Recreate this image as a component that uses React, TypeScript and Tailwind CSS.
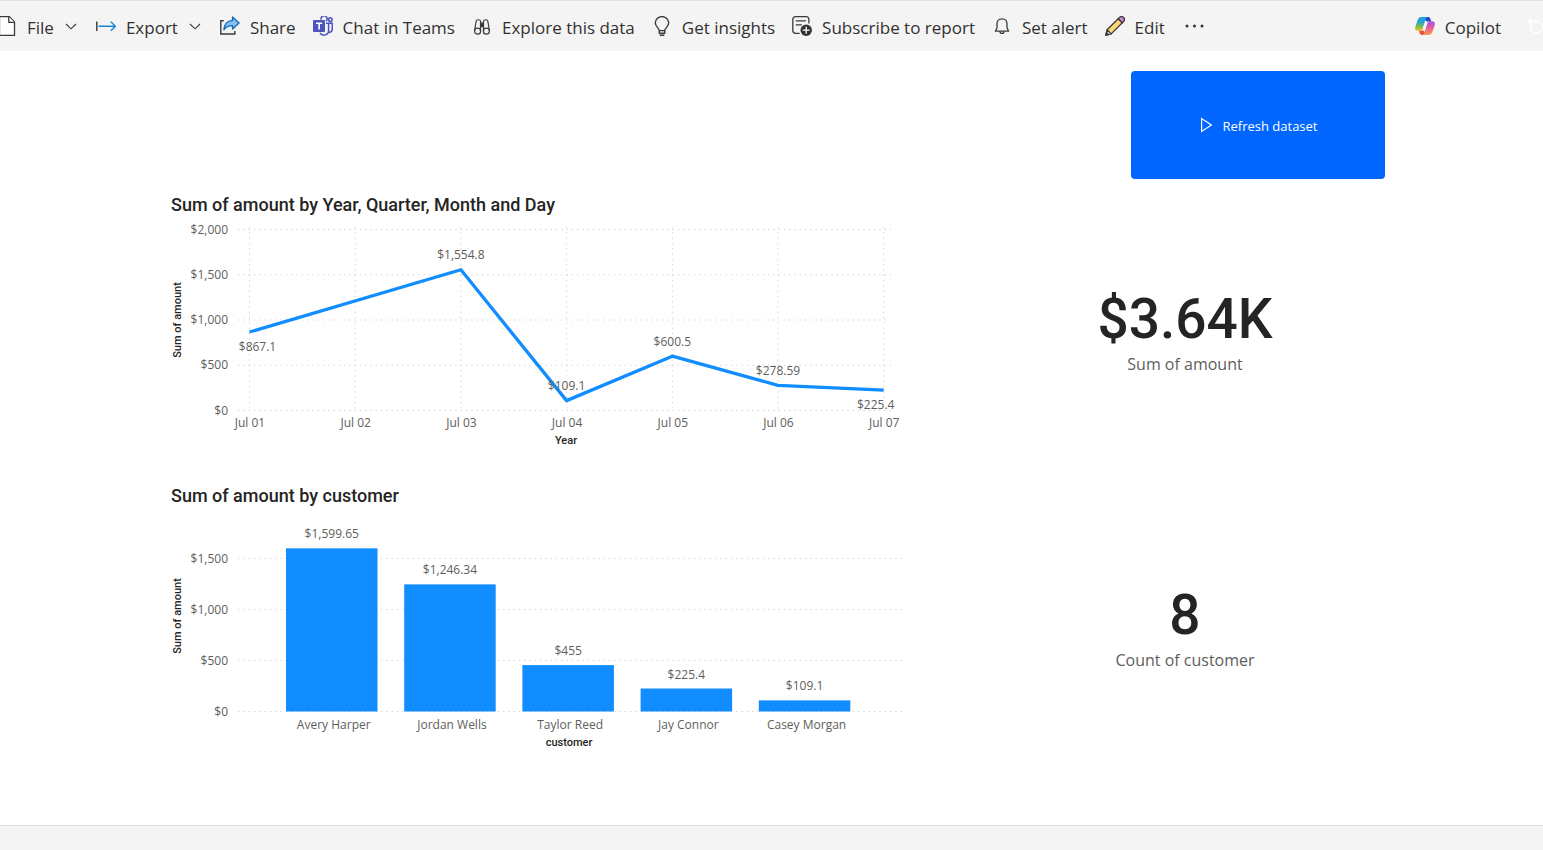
import type { ReactNode } from "react"

const dailyData = [
  { day: "Jul 01", value: 867.1, label: "$867.1", dx: 8, dy: 19 },
  { day: "Jul 02", value: null, label: "", dx: 0, dy: 0 },
  { day: "Jul 03", value: 1554.8, label: "$1,554.8", dx: 0, dy: -11 },
  { day: "Jul 04", value: 109.1, label: "$109.1", dx: 0, dy: -11 },
  { day: "Jul 05", value: 600.5, label: "$600.5", dx: 0, dy: -10 },
  { day: "Jul 06", value: 278.59, label: "$278.59", dx: 0, dy: -10 },
  { day: "Jul 07", value: 225.4, label: "$225.4", dx: -8, dy: 19 },
]

const customerData = [
  { name: "Avery Harper", value: 1599.65, label: "$1,599.65" },
  { name: "Jordan Wells", value: 1246.34, label: "$1,246.34" },
  { name: "Taylor Reed", value: 455, label: "$455" },
  { name: "Jay Connor", value: 225.4, label: "$225.4" },
  { name: "Casey Morgan", value: 109.1, label: "$109.1" },
]

const formatTick = (value: number) => `$${value.toLocaleString("en-US")}`

/* Toolbar icons */

function FileIcon() {
  return (
    <svg width="20" height="20" viewBox="0 0 20 20" fill="#fff" stroke="#3b3a39" strokeWidth="1.3">
      <path d="M2.500 .7h9.800l5.200 5.200v13.4H2.500z" />
      <path d="M11.800 .7v5.700h5.700" />
    </svg>
  )
}

function ExportIcon() {
  return (
    <svg width="20" height="20" viewBox="0 0 20 20" fill="none" strokeWidth="1.4">
      <path d="M.8 5.500v9.500" stroke="#3b3a39" />
      <path d="M2.500 10.300h17M14.800 5.800l4.600 4.500-4.600 4.500" stroke="#1a86d0" />
    </svg>
  )
}

function ShareIcon() {
  return (
    <svg width="20" height="20" viewBox="0 0 20 20" fill="none">
      <path d="M3.800 4.700H.8v13.300h14v-3" stroke="#3b3a39" strokeWidth="1.4" />
      <path
        d="M12.500 .9l6.600 6.100-6.600 6v-3.400c-4-.1-6.500 1.200-8.600 4.300.3-5.300 3.200-9 8.600-9.500z"
        fill="#83beec"
        stroke="#0f6cbd"
        strokeWidth="1.3"
        strokeLinejoin="round"
      />
    </svg>
  )
}

function TeamsIcon() {
  return (
    <svg width="20" height="20" viewBox="0 0 20 20" fill="none" stroke="#4b53bc" strokeWidth="1.5">
      <path d="M8.200 3.600A3 3 0 1 1 13 5.200" />
      <circle cx="17.300" cy="3.600" r="1.800" />
      <path d="M13 7.200h2.600v7.200a4.700 4.700 0 0 1-8.600 2.600" />
      <path d="M15.600 7.200h3.700v5.600c0 2.300-1.500 3.800-3.800 3.700" />
      <rect x="0" y="4" width="12" height="12" rx="1" fill="#4b53bc" stroke="none" />
      <path d="M3 7.200h6.200M6.100 7.200v6.200" stroke="#fff" strokeWidth="1.6" />
    </svg>
  )
}

function BinocularsIcon() {
  return (
    <svg width="20" height="20" viewBox="0 0 20 20" fill="none" stroke="#3b3a39" strokeWidth="1.2">
      <path d="M2.600 14.500L4.200 5c.3-1.700 4-1.700 4.300 0v10.500" />
      <path d="M17.400 14.500L15.800 5c-.3-1.700-4-1.700-4.300 0v10.500" />
      <circle cx="5.600" cy="15.200" r="3" />
      <circle cx="14.400" cy="15.200" r="3" />
      <path d="M9 7.200h2v3.500H9z" fill="#3b3a39" />
    </svg>
  )
}

function BulbIcon() {
  return (
    <svg width="20" height="20" viewBox="0 0 20 20" fill="none" stroke="#3b3a39" strokeWidth="1.4" strokeLinecap="round">
      <path d="M7.300 14.600c0-2.400-4-4-4-7.700a6.600 6.200 0 0 1 13.400 0c0 3.700-4 5.300-4 7.700z" strokeLinejoin="round" />
      <path d="M7.300 14.600v2.600h5.400v-2.600M8.200 19.200h3.600" />
    </svg>
  )
}

function SubscribeIcon() {
  return (
    <svg width="20" height="20" viewBox="0 0 20 20" fill="none" stroke="#3b3a39" strokeWidth="1.3" strokeLinecap="round">
      <path d="M7.200 17.300H3.500A2.700 2.700 0 0 1 .8 14.600V3.400A2.700 2.700 0 0 1 3.500.7h10.700a2.700 2.700 0 0 1 2.700 2.700v3.700" />
      <path d="M4.200 4.800h9.200M4.200 8.800h5.200" />
      <circle cx="14.200" cy="14.200" r="5.700" fill="#323130" stroke="none" />
      <path d="M14.200 11.200v6M11.200 14.200h6" stroke="#fff" />
    </svg>
  )
}

function BellIcon() {
  return (
    <svg width="20" height="20" viewBox="0 0 20 20" fill="none" stroke="#3b3a39" strokeWidth="1.3" strokeLinejoin="round">
      <path d="M10 2.800c-3 0-5 2.200-5 5v4l-1.600 3.400h13.200L15 11.800v-4c0-2.800-2-5-5-5z" />
      <path d="M8 15.400a2 2 0 0 0 4 0" />
    </svg>
  )
}

function PencilIcon() {
  return (
    <svg width="20" height="20" viewBox="0 0 20 20" stroke="#3b3a39" strokeWidth="1.3" strokeLinejoin="round">
      <path d="M.8 19.200l1.300-5.400 4.100 4.100z" fill="#fff" />
      <path d="M2.100 13.800L13.200 2.700l4.100 4.100L6.200 17.900z" fill="#ffd679" />
      <path d="M13.200 2.700l1.300-1.300a2.900 2.900 0 0 1 4.100 4.100l-1.300 1.300z" fill="#c586d6" />
      <path d="M.8 19.200l.7-2.700 2 2z" fill="#3b3a39" />
    </svg>
  )
}

function CopilotIcon() {
  return (
    <svg width="20" height="20" viewBox="0 0 20 20">
      <defs>
        <linearGradient id="copilotLeft" x1="0" y1="0" x2="0" y2="1">
          <stop offset="0" stopColor="#1a9ee8" />
          <stop offset=".4" stopColor="#27a7c4" />
          <stop offset=".7" stopColor="#7cbb4a" />
          <stop offset="1" stopColor="#f2c418" />
        </linearGradient>
        <linearGradient id="copilotRight" x1="0" y1="0" x2="0" y2="1">
          <stop offset="0" stopColor="#a14fe6" />
          <stop offset=".5" stopColor="#ec5f95" />
          <stop offset="1" stopColor="#fb9a4b" />
        </linearGradient>
      </defs>
      <path d="M9.500 1h3.700c1.300 0 1.900.9 2.200 1.900l.8 2.700h-3.700c-2 0-2.800-1.800-3-4.600z" fill="#1c49c9" />
      <path d="M10.500 19H6.800c-1.300 0-1.900-.9-2.200-1.900l-.8-2.700h3.700c2 0 2.800 1.800 3 4.600z" fill="#f0533c" />
      <path d="M6.500 1h6.200c-1.500.4-2 1.700-2.400 3l-2.600 8.600c-.5 1.600-1.400 2.200-3 2.200H2.800C.5 14.800-.3 13 .3 10.800L2.700 3.900C3.300 2 4.500 1 6.500 1z" fill="url(#copilotLeft)" />
      <path d="M13.500 19H7.300c1.500-.4 2-1.700 2.400-3l2.600-8.600c.5-1.600 1.400-2.200 3-2.200h1.900c2.300 0 3.100 1.800 2.500 4l-2.400 6.900c-.6 1.900-1.800 2.900-3.800 2.900z" fill="url(#copilotRight)" />
    </svg>
  )
}

function ResetIcon() {
  return (
    <svg width="20" height="20" viewBox="0 0 20 20" fill="none" stroke="#fff" strokeWidth="1.3">
      <path d="M5 2L1.300 5.500 5 9M1.500 5.500h10a6 6 0 1 1-7.800 4.200" />
    </svg>
  )
}

function Chevron() {
  return (
    <svg width="12" height="12" viewBox="0 0 12 12" fill="none" stroke="#3b3a39" strokeWidth="1.1" className="mr-[2px] ml-[1px]">
      <path d="M1 4l5 4.800L11 4" />
    </svg>
  )
}

function ToolbarButton({ icon, label, menu }: { icon: ReactNode; label: string; menu?: boolean }) {
  return (
    <button type="button" className="flex shrink-0 items-center gap-[10px] whitespace-nowrap">
      {icon}
      <span className="pt-1">{label}</span>
      {menu && <Chevron />}
    </button>
  )
}

function Toolbar() {
  return (
    <header className="flex h-[51px] items-center overflow-hidden border-t border-[#e1e1e1] bg-[#f4f4f4] text-[17px] leading-6 text-[#323130]">
      <nav className="-ml-[3px] flex items-center gap-[17px]">
        <ToolbarButton icon={<FileIcon />} label="File" menu />
        <ToolbarButton icon={<ExportIcon />} label="Export" menu />
        <ToolbarButton icon={<ShareIcon />} label="Share" />
        <ToolbarButton icon={<TeamsIcon />} label="Chat in Teams" />
        <ToolbarButton icon={<BinocularsIcon />} label="Explore this data" />
        <ToolbarButton icon={<BulbIcon />} label="Get insights" />
        <ToolbarButton icon={<SubscribeIcon />} label="Subscribe to report" />
        <ToolbarButton icon={<BellIcon />} label="Set alert" />
        <ToolbarButton icon={<PencilIcon />} label="Edit" />
        <button type="button" aria-label="More options">
          <svg width="24" height="20" viewBox="0 0 24 20" fill="#323130">
            <circle cx="5" cy="10" r="1.5" />
            <circle cx="12.500" cy="10" r="1.5" />
            <circle cx="20" cy="10" r="1.5" />
          </svg>
        </button>
      </nav>
      <div className="-mr-1 ml-auto flex items-center gap-[26px]">
        <ToolbarButton icon={<CopilotIcon />} label="Copilot" />
        <button type="button" aria-label="Reset filters">
          <ResetIcon />
        </button>
      </div>
    </header>
  )
}

/* Charts */

function GridLine({ x1, y1, x2, y2 }: { x1: number; y1: number; x2: number; y2: number }) {
  return <line x1={x1} y1={y1} x2={x2} y2={y2} stroke="#d0d0d0" strokeWidth="1" strokeDasharray="1.3 4" />
}

function AxisTitle({ x, y, vertical, children }: { x: number; y: number; vertical?: boolean; children: string }) {
  return (
    <text
      x={x}
      y={y}
      textAnchor="middle"
      transform={vertical ? `rotate(-90 ${x} ${y})` : undefined}
      className="fill-[#252423] font-[Roboto] text-[11px] font-medium"
    >
      {children}
    </text>
  )
}

function LineChart() {
  const baseline = 193.5
  const toX = (i: number) => 78.5 + i * 105.7
  const toY = (value: number) => baseline - (value / 2000) * 181
  const points = dailyData
    .map((d, i) => (d.value === null ? null : `${toX(i)},${toY(d.value)}`))
    .filter(Boolean)
    .join(" ")

  return (
    <svg viewBox="0 0 734 235" className="block w-full" role="img" aria-label="Sum of amount by day">
      {[0, 500, 1000, 1500, 2000].map((tick) => (
        <g key={tick}>
          <GridLine x1={67} y1={toY(tick)} x2={720} y2={toY(tick)} />
          <text x={57} y={toY(tick) + 4} textAnchor="end" className="fill-[#605e5c] text-[12px]">
            {formatTick(tick)}
          </text>
        </g>
      ))}
      {dailyData.map((d, i) => (
        <g key={d.day}>
          <GridLine x1={toX(i)} y1={10} x2={toX(i)} y2={baseline} />
          <text x={toX(i) + 0.5} y={210} textAnchor="middle" className="fill-[#605e5c] text-[12px]">
            {d.day}
          </text>
        </g>
      ))}
      <polyline points={points} fill="none" stroke="#118dff" strokeWidth="3.3" strokeLinejoin="round" />
      {dailyData.map((d, i) =>
        d.value === null ? null : (
          <text key={d.day} x={toX(i) + d.dx} y={toY(d.value) + d.dy} textAnchor="middle" className="fill-[#605e5c] text-[12px]">
            {d.label}
          </text>
        )
      )}
      <AxisTitle x={10} y={103} vertical>Sum of amount</AxisTitle>
      <AxisTitle x={395} y={227}>Year</AxisTitle>
    </svg>
  )
}

function BarChart() {
  const baseline = 203.5
  const barWidth = 91.5
  const toX = (i: number) => 115 + i * 118.2
  const toY = (value: number) => baseline - value * 0.102

  return (
    <svg viewBox="0 0 734 244" className="block w-full" role="img" aria-label="Sum of amount by customer">
      {[0, 500, 1000, 1500].map((tick) => (
        <g key={tick}>
          <GridLine x1={67} y1={toY(tick)} x2={731} y2={toY(tick)} />
          <text x={57} y={toY(tick) + 4} textAnchor="end" className="fill-[#605e5c] text-[12px]">
            {formatTick(tick)}
          </text>
        </g>
      ))}
      {customerData.map((d, i) => (
        <g key={d.name}>
          <rect x={toX(i)} y={toY(d.value)} width={barWidth} height={baseline - toY(d.value)} fill="#118dff" />
          <text x={toX(i) + barWidth / 2} y={toY(d.value) - 10} textAnchor="middle" className="fill-[#605e5c] text-[12px]">
            {d.label}
          </text>
          <text x={toX(i) + barWidth / 2 + 2} y={221} textAnchor="middle" className="fill-[#605e5c] text-[12px]">
            {d.name}
          </text>
        </g>
      ))}
      <AxisTitle x={10} y={108} vertical>Sum of amount</AxisTitle>
      <AxisTitle x={398} y={238}>customer</AxisTitle>
    </svg>
  )
}

function ChartPanel({ title, children }: { title: string; children: ReactNode }) {
  return (
    <section>
      <h2 className="font-[Roboto] text-[18px] leading-6 font-medium text-[#252423]">{title}</h2>
      {children}
    </section>
  )
}

function KpiCard({ value, label }: { value: string; label: string }) {
  return (
    <section className="flex flex-col items-center justify-center pt-[22px]">
      <p className="font-[Roboto] text-[55px] leading-[56px] font-medium text-[#252423]">{value}</p>
      <p className="mt-[5px] text-[16px] leading-6 text-[#605e5c]">{label}</p>
    </section>
  )
}

export default function App() {
  return (
    <div className="flex min-h-screen flex-col bg-white font-['Open_Sans',sans-serif]">
      <Toolbar />
      <main className="mx-auto w-full max-w-[1375px] flex-1 pt-5 pr-[74px] pl-[87px]">
        <div className="flex justify-end">
          <button
            type="button"
            className="flex h-[108px] w-[254px] items-center justify-center gap-2 rounded bg-[#0066ff] text-[13px] text-white"
          >
            <svg width="16" height="16" viewBox="0 0 16 16" fill="none" stroke="#fff" strokeWidth="1.2">
              <path d="M3.600 1.600v12.800L13.400 8z" />
            </svg>
            <span className="pt-1">Refresh dataset</span>
          </button>
        </div>
        <div className="mt-[14px] grid grid-cols-[minmax(0,1fr)_400px] gap-x-20 gap-y-8">
          <ChartPanel title="Sum of amount by Year, Quarter, Month and Day">
            <LineChart />
          </ChartPanel>
          <KpiCard value="$3.64K" label="Sum of amount" />
          <ChartPanel title="Sum of amount by customer">
            <BarChart />
          </ChartPanel>
          <KpiCard value="8" label="Count of customer" />
        </div>
      </main>
      <footer className="h-[25px] border-t border-[#e1dfdd] bg-[#f4f4f4]" />
    </div>
  )
}
